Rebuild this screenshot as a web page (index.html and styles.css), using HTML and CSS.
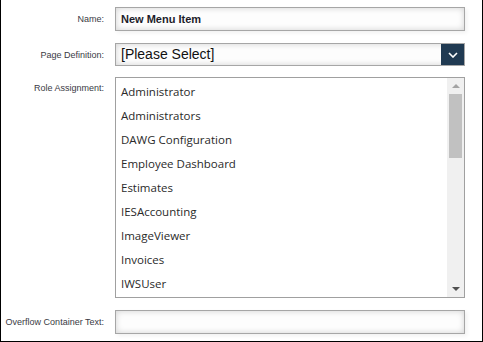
FILE: index.html
```html
<!DOCTYPE html>
<html lang="en">
<head>
<meta charset="UTF-8">
<title>Menu Item</title>
<link rel="stylesheet" href="styles.css">
</head>
<body>
<div class="panel">
  <form class="item-form">
    <div class="form-row">
      <label for="name">Name:</label>
      <input type="text" id="name" class="text-box bold" value="New Menu Item">
    </div>
    <div class="form-row">
      <label>Page Definition:</label>
      <div class="select-box">
        <span class="select-text">[Please Select]</span>
        <span class="select-button">
          <svg width="10" height="6" viewBox="0 0 10 6"><path d="M1 1 L5 5 L9 1" fill="none" stroke="#fff" stroke-width="1.6"/></svg>
        </span>
      </div>
    </div>
    <div class="form-row top">
      <label>Role Assignment:</label>
      <div class="list-box">
        <ul class="role-list">
          <li>Administrator</li>
          <li>Administrators</li>
          <li>DAWG Configuration</li>
          <li>Employee Dashboard</li>
          <li>Estimates</li>
          <li>IESAccounting</li>
          <li>ImageViewer</li>
          <li>Invoices</li>
          <li>IWSUser</li>
        </ul>
        <div class="scrollbar">
          <span class="arrow up"></span>
          <div class="track"><div class="thumb"></div></div>
          <span class="arrow down"></span>
        </div>
      </div>
    </div>
    <div class="form-row">
      <label for="overflow">Overflow Container Text:</label>
      <input type="text" id="overflow" class="text-box">
    </div>
  </form>
</div>
</body>
</html>
```

FILE: styles.css
```css
body {
  margin: 0;
  padding: 0;
  background-color: white;
  font-family: "Open Sans", "Liberation Sans", sans-serif;
}
.panel {
  width: 481px;
  height: 341px;
  border: 1px solid black;
  border-top: none;
}
.item-form {
  display: flex;
  flex-direction: column;
  padding-top: 7px;
}
.form-row {
  display: grid;
  grid-template-columns: 103px 350px;
  column-gap: 11px;
  align-items: center;
  margin-bottom: 11px;
}
.form-row:first-child {
  margin-bottom: 12px;
}
.form-row label {
  text-align: right;
  white-space: nowrap;
  font-family: "Liberation Sans", Arial, sans-serif;
  font-size: 9px;
  color: #3a3a44;
}
.form-row.top {
  align-items: start;
  margin-bottom: 12px;
}
.form-row.top label {
  padding-top: 6px;
}
.text-box {
  height: 24px;
  width: 350px;
  box-sizing: border-box;
  border: 1px solid #a6a6a6;
  background: #fdfdfd;
  box-shadow: inset 0 0 6px rgba(0, 0, 0, 0.18), 2px 2px 4px rgba(0, 0, 0, 0.06);
  padding: 0 5px;
  font-family: "Liberation Sans", Arial, sans-serif;
  font-size: 11px;
  color: #1c1c2a;
  outline: none;
}
.text-box.bold {
  font-weight: bold;
}
.select-box {
  display: flex;
  height: 23px;
  box-sizing: border-box;
  border: 1px solid #a6a6a6;
  background: #fdfdfd;
  box-shadow: inset 0 0 6px rgba(0, 0, 0, 0.18);
}
.select-text {
  flex: 1;
  padding-left: 5px;
  font-family: "Liberation Sans", Arial, sans-serif;
  font-size: 14px;
  line-height: 21px;
  color: #111;
}
.select-button {
  width: 23px;
  background-color: #203a52;
  display: flex;
  align-items: center;
  justify-content: center;
}
.list-box {
  display: flex;
  height: 221px;
  box-sizing: border-box;
  border: 1px solid #a0a0a0;
  background: white;
}
.role-list {
  flex: 1;
  list-style: none;
  margin: 0;
  padding: 2px 0 0 5px;
  overflow: hidden;
}
.role-list li {
  height: 24px;
  line-height: 24px;
  font-size: 11.5px;
  color: #2a2a2a;
}
.scrollbar {
  width: 17px;
  background-color: #f0f0f0;
  display: flex;
  flex-direction: column;
  align-items: center;
}
.arrow {
  width: 0;
  height: 0;
  border-left: 4px solid transparent;
  border-right: 4px solid transparent;
  margin: 6px 0;
}
.arrow.up {
  border-bottom: 4px solid #a3a3a3;
}
.arrow.down {
  border-top: 4px solid #505050;
}
.track {
  flex: 1;
  width: 100%;
  display: flex;
  justify-content: center;
}
.thumb {
  width: 13px;
  height: 64px;
  background-color: #c1c1c1;
}
```
